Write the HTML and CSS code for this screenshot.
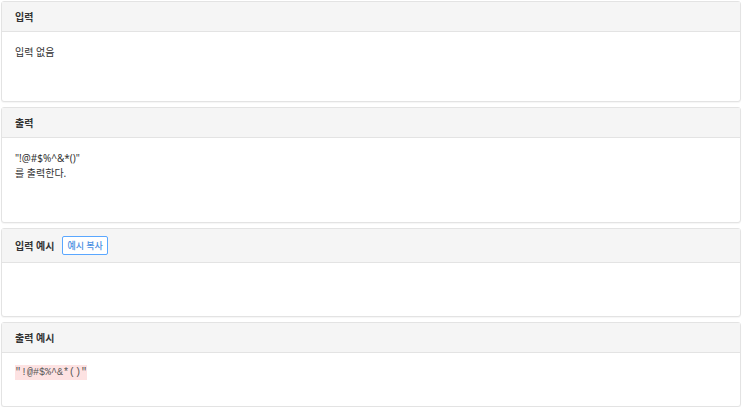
FILE: index.html
```html
<!DOCTYPE html>
<html lang="ko">
<head>
<meta charset="utf-8">
<link rel="stylesheet" href="styles.css">
</head>
<body>
<div class="page">
  <section class="panel">
    <div class="panel-heading"><h3 class="panel-title">입력</h3></div>
    <div class="panel-body desc"><p>입력 없음</p></div>
  </section>
  <section class="panel">
    <div class="panel-heading"><h3 class="panel-title">출력</h3></div>
    <div class="panel-body desc"><p>"!@#$%^&amp;*()"<br>를 출력한다.</p></div>
  </section>
  <section class="panel">
    <div class="panel-heading heading-btn"><h3 class="panel-title">입력 예시</h3><button class="copy-btn">예시 복사</button></div>
    <div class="panel-body sample"><pre class="sample-data"></pre></div>
  </section>
  <section class="panel">
    <div class="panel-heading"><h3 class="panel-title">출력 예시</h3></div>
    <div class="panel-body sample"><pre class="sample-data"><code class="out">"!@#$%^&amp;*()"</code></pre></div>
  </section>
</div>
</body>
</html>
```
FILE: styles.css
```css
* { box-sizing: border-box; }
html, body { margin: 0; padding: 0; background: #fff; }
body {
  font-family: "Noto Sans", "Noto Sans CJK KR", sans-serif;
  font-size: 10px;
  color: #333;
}
.page {
  padding: 1px 1px 0 1px;
  display: flex;
  flex-direction: column;
  gap: 5px;
  width: 742px;
}
.panel {
  border: 1px solid #e3e3e3;
  border-radius: 3px;
  box-shadow: 0 1px 1px rgba(0,0,0,0.04);
  background: #fff;
}
.panel-heading {
  background: #f5f5f5;
  border-bottom: 1px solid #e3e3e3;
  padding: 6px 13px;
  height: 30px;
  display: flex;
  align-items: center;
}
.heading-btn { height: 34px; gap: 8px; }
.panel-title {
  margin: 0;
  font-size: 10px;
  font-weight: bold;
  color: #333;
  line-height: 16px;
}
.copy-btn {
  font-family: "Noto Sans", "Noto Sans CJK KR", sans-serif;
  font-size: 9px;
  font-weight: 500;
  color: #4a90e2;
  background: #fff;
  border: 1px solid #5aa7ff;
  border-radius: 2px;
  height: 19px;
  padding: 0 4px;
  line-height: 17px;
}
.panel-body { padding: 13px 13px 0 13px; }
.desc p {
  margin: 0 0 41px 0;
  line-height: 15px;
}
.sample { height: 53px; }
.sample-data {
  margin: 0;
  font-family: "Liberation Mono", monospace;
  font-size: 10px;
  line-height: 14px;
}
.out {
  background: #fde2e2;
  color: #555;
  padding: 2px 0;
  font-family: "Liberation Mono", monospace;
  font-size: 10px;
}
```
